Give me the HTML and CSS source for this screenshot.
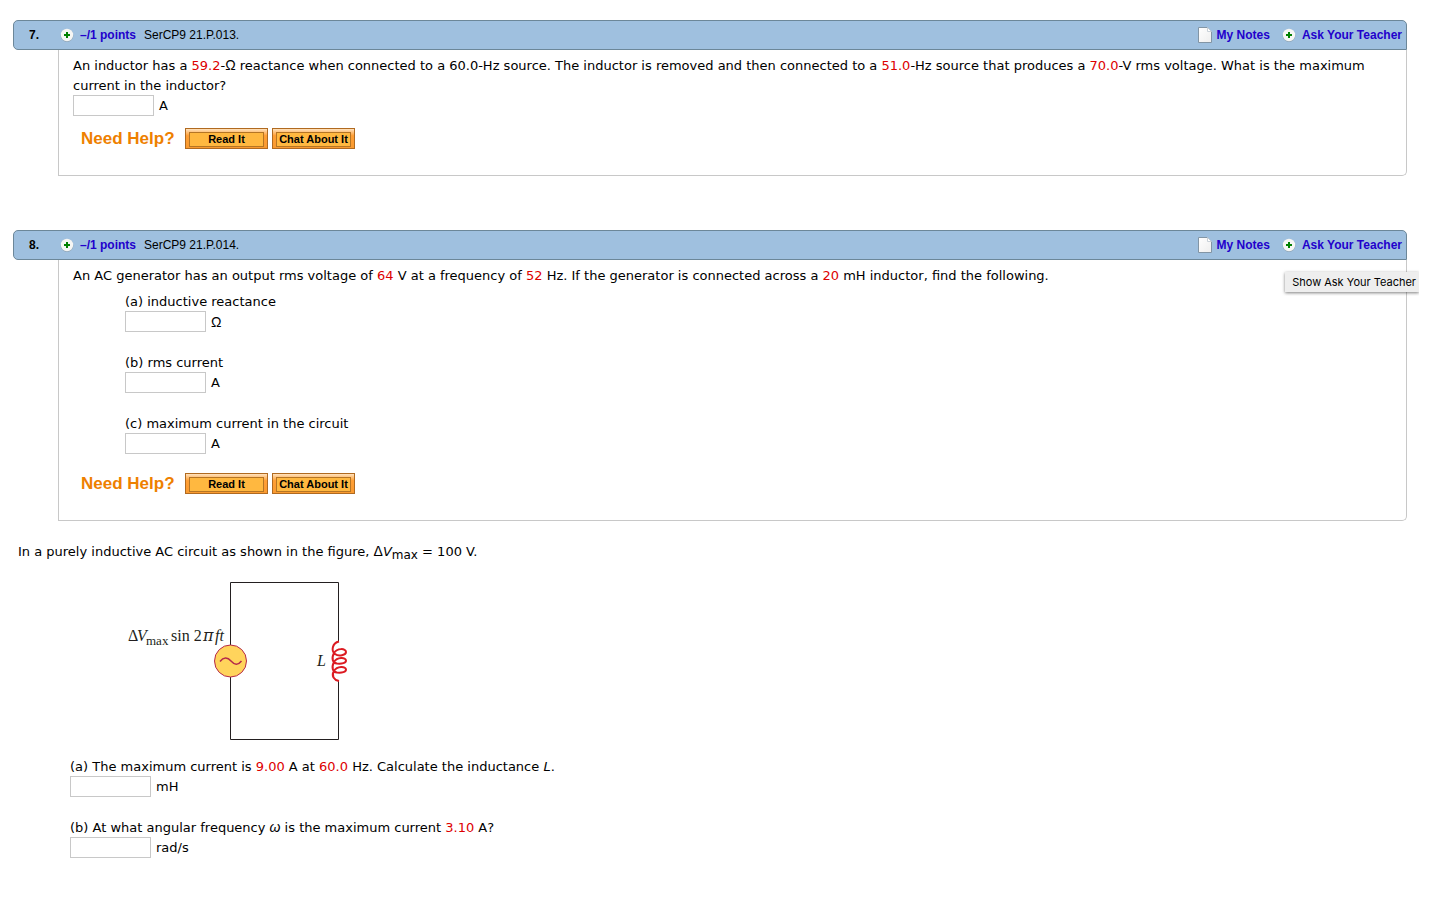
FILE: index.html
```
<!DOCTYPE html>
<html lang="en">
<head>
    <meta charset="UTF-8">
    <meta name="viewport" content="width=device-width, initial-scale=1.0">
    <title>Inductors in AC Circuits</title>
    <link rel="stylesheet" href="styles.css">
</head>
<body>
    <!-- shared icons -->
    <svg class="icon-defs" aria-hidden="true">
        <defs>
            <linearGradient id="pageShade" x1="0" y1="0" x2="1" y2="1">
                <stop offset="0" stop-color="#fff"/>
                <stop offset="1" stop-color="#eee"/>
            </linearGradient>
        </defs>
        <symbol id="plus" viewBox="0 0 14 14">
            <circle cx="7" cy="7.5" r="6.4" fill="#8fa5b5"/>
            <circle cx="7" cy="7" r="6.2" fill="#f6f6f4"/>
            <path d="M4 7h6M7 4v6" stroke="#008000" stroke-width="2"/>
        </symbol>
        <symbol id="page" viewBox="0 0 14 16">
            <path d="M.5.5h9l4 4v11H.5z" fill="url(#pageShade)" stroke="#8295a5"/>
            <path d="M9.5.5v4h4" fill="#fff" stroke="#c9d1d8"/>
        </symbol>
    </svg>

    <section class="question">
        <header class="question-bar">
            <span class="number">7.</span>
            <a href="#" class="points"><svg class="plus"><use href="#plus"/></svg>&ndash;/1 points</a>
            <span class="source">SerCP9 21.P.013.</span>
            <div class="tools">
                <a href="#"><svg class="page"><use href="#page"/></svg>My Notes</a>
                <a href="#"><svg class="plus"><use href="#plus"/></svg>Ask Your Teacher</a>
            </div>
        </header>
        <div class="question-body">
            <label for="q7">An inductor has a <span class="value">59.2</span>-<span class="symbol">&Omega;</span> reactance when connected to a 60.0-Hz source. The inductor is removed and then connected to a <span class="value">51.0</span>-Hz source that produces a <span class="value">70.0</span>-V rms voltage. What is the maximum current in the inductor?</label>
            <div class="answer"><input type="text" id="q7"> A</div>
            <div class="help">
                <span class="help-title">Need Help?</span>
                <button type="button"><span>Read It</span></button>
                <button type="button"><span>Chat About It</span></button>
            </div>
        </div>
    </section>

    <section class="question">
        <header class="question-bar">
            <span class="number">8.</span>
            <a href="#" class="points"><svg class="plus"><use href="#plus"/></svg>&ndash;/1 points</a>
            <span class="source">SerCP9 21.P.014.</span>
            <div class="tools">
                <a href="#"><svg class="page"><use href="#page"/></svg>My Notes</a>
                <a href="#" aria-describedby="teacherTip"><svg class="plus"><use href="#plus"/></svg>Ask Your Teacher</a>
            </div>
            <div class="tooltip" role="tooltip" id="teacherTip">Show Ask Your Teacher</div>
        </header>
        <div class="question-body">
            <p>An AC generator has an output rms voltage of <span class="value">64</span> V at a frequency of <span class="value">52</span> Hz. If the generator is connected across a <span class="value">20</span> mH inductor, find the following.</p>
            <div class="parts">
                <div class="part">
                    <label for="q8a">(a) inductive reactance</label>
                    <div class="answer"><input type="text" id="q8a"> <span class="symbol">&Omega;</span></div>
                </div>
                <div class="part">
                    <label for="q8b">(b) rms current</label>
                    <div class="answer"><input type="text" id="q8b"> A</div>
                </div>
                <div class="part">
                    <label for="q8c">(c) maximum current in the circuit</label>
                    <div class="answer"><input type="text" id="q8c"> A</div>
                </div>
            </div>
            <div class="help">
                <span class="help-title">Need Help?</span>
                <button type="button"><span>Read It</span></button>
                <button type="button"><span>Chat About It</span></button>
            </div>
        </div>
    </section>

    <section class="circuit-question">
        <p>In a purely inductive AC circuit as shown in the figure, <span class="symbol">&Delta;</span><i>V</i><sub>max</sub> = 100 V.</p>
        <svg class="circuit" width="240" height="180" viewBox="0 0 240 180" role="img" aria-label="AC source connected to an inductor L">
            <path d="M110.500 76V12.500H218.500V72M218.500 111V169.500H110.500V107" fill="none" stroke="#231f20"/>
            <circle cx="110.500" cy="91" r="16" fill="#ffd45c" stroke="#b5294a"/>
            <path d="M100 91.500C103.500 87 107.500 87 111 91S118 95.500 121.500 91" fill="none" stroke="#b5294a" stroke-width="1.500"/>
            <path d="M219 71.500C212 73 211 81 215 84C219 87 226 85 226 82C226 78 217 78 214 83C211 89 213 93 217 93.500C222 94 226 93 226 90.500C226 87 217 87 214 92C211 98 213 102 217 102.500C222 103 226 102 226 99.500C226 96 217 96 214 101C211 106 214 110 219 111" fill="none" stroke="#dc1a21" stroke-width="2"/>
            <g class="circuit-text">
                <text x="8" y="71">Δ</text>
                <text x="17" y="71" class="italic">V</text>
                <text x="26" y="75" class="small">max</text>
                <text x="51" y="71">sin 2</text>
                <text x="83" y="71" class="italic pi">π</text>
                <text x="95" y="71" class="italic">ft</text>
                <text x="197" y="96" class="italic">L</text>
            </g>
        </svg>
        <div class="parts">
            <div class="part">
                <label for="q9a">(a) The maximum current is <span class="value">9.00</span> A at <span class="value">60.0</span> Hz. Calculate the inductance <i>L</i>.</label>
                <div class="answer"><input type="text" id="q9a"> mH</div>
            </div>
            <div class="part">
                <label for="q9b">(b) At what angular frequency <i class="symbol">&omega;</i> is the maximum current <span class="value">3.10</span> A?</label>
                <div class="answer"><input type="text" id="q9b"> rad/s</div>
            </div>
        </div>
    </section>
</body>
</html>
```
FILE: styles.css
```
* {
    box-sizing: border-box;
}

body {
    margin: 0;
    padding: 20px 33px 20px 13px;
    font-family: Verdana, 'DejaVu Sans', sans-serif;
    font-size: 13px;
    line-height: 20px;
    color: #000;
    background-color: #fff;
}

p {
    margin: 0;
}

label {
    display: block;
}

a {
    color: #2200cc;
    text-decoration: none;
}

.icon-defs {
    position: absolute;
    width: 0;
    height: 0;
}

.question {
    margin-bottom: 54px;
}

.question + .circuit-question {
    margin-top: -33px;
}

/* Blue title bar */
.question-bar {
    position: relative;
    display: flex;
    align-items: center;
    height: 30px;
    padding: 0 4px 0 15px;
    border: 1px solid #6c8799;
    border-radius: 5px 5px 0 5px;
    background-color: #9fc0df;
    font-family: Arial, 'Liberation Sans', sans-serif;
    font-size: 12px;
}

.number {
    width: 31px;
    font-weight: bold;
}

.points,
.tools a {
    display: flex;
    align-items: center;
    font-weight: bold;
}

.source {
    margin-left: 8px;
}

.tools {
    display: flex;
    gap: 12px;
    margin-left: auto;
}

.plus {
    width: 14px;
    height: 14px;
    margin-right: 6px;
}

.page {
    width: 14px;
    height: 16px;
    margin-right: 5px;
}

.tooltip {
    position: absolute;
    top: 41px;
    right: -13px;
    padding: 0 3px 0 7px;
    background-color: #eee;
    box-shadow: 0 1px 3px rgba(0, 0, 0, 0.5);
    clip-path: inset(-4px 0 -4px -4px);
    font-family: Inter, sans-serif;
    font-size: 11px;
    white-space: nowrap;
}

/* Question content */
.question-body {
    margin-left: 45px;
    padding: 6px 14px 26px;
    border: 1px solid #c8c8c8;
    border-top: none;
    border-radius: 0 0 5px 0;
}

.value {
    color: #dd0000;
}

.symbol {
    font-family: 'Liberation Sans', sans-serif;
    font-size: 14px;
    line-height: 1;
}

.answer {
    display: flex;
    align-items: center;
    gap: 5px;
    height: 21px;
    margin-top: -1px;
}

.answer input {
    width: 81px;
    height: 21px;
    padding: 2px;
    border: 1px solid #c8c8c8;
    font: inherit;
}

.parts {
    margin: 6px 0 0 52px;
}

.part + .part {
    margin-top: 21px;
}

.help {
    display: flex;
    align-items: center;
    gap: 4px;
    height: 21px;
    margin: 12px 0 0 8px;
}

.parts + .help {
    margin-top: 19px;
}

.help-title {
    width: 100px;
    color: #ee8000;
    font-family: Arial, 'Liberation Sans', sans-serif;
    font-size: 17px;
    font-weight: bold;
}

.help button {
    width: 83px;
    height: 21px;
    padding: 3px;
    border: 1px solid #b06a20;
    background: linear-gradient(#ffe2bd, #ff9f35 35%, #f99a30);
    font-family: Arial, 'Liberation Sans', sans-serif;
    font-size: 11px;
    font-weight: bold;
    line-height: 13px;
    white-space: nowrap;
}

.help button span {
    display: flex;
    justify-content: center;
    height: 15px;
    border: 1px solid #b57524;
    background-color: #ffb840;
}

/* Circuit question */
.circuit-question {
    padding-left: 5px;
}

.circuit-question sub {
    font-size: 12px;
    line-height: 1;
    vertical-align: -3px;
}

.circuit {
    display: block;
    margin: 8px 0 0 102px;
}

.circuit + .parts {
    margin-top: 7px;
}

.circuit-text {
    fill: #231f20;
    font-family: 'Liberation Serif', serif;
    font-size: 16px;
}

.circuit-text .small {
    font-size: 13px;
}

.circuit-text .italic {
    font-style: italic;
}

.circuit-text .pi {
    font-family: 'DejaVu Serif', serif;
}
```
